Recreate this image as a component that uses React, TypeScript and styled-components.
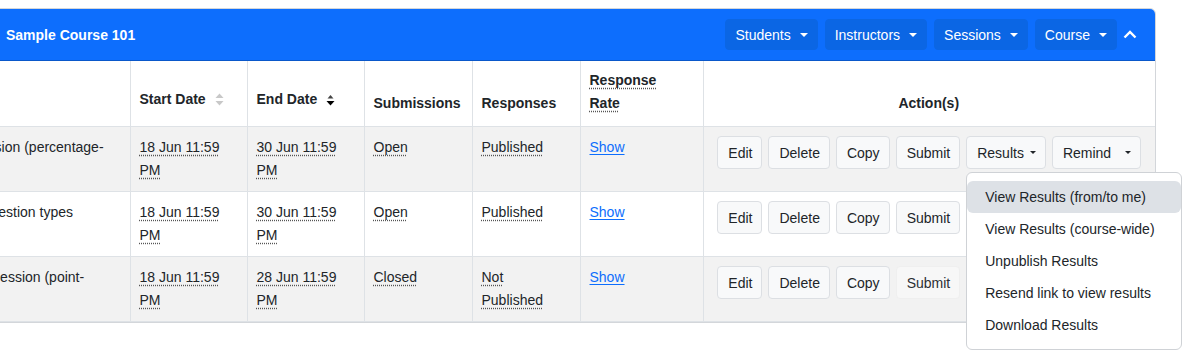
import React from "react";
import styled, { createGlobalStyle, css } from "styled-components";

const GlobalStyle = createGlobalStyle`
  html, body { margin: 0; padding: 0; background: #fff; overflow: hidden; }
  body {
    font-family: "Liberation Sans", Arial, sans-serif;
    font-size: 14px;
    color: #212529;
  }
  * { box-sizing: border-box; }
`;

const FONT = `"Liberation Sans", Arial, sans-serif`;

const Page = styled.div`
  padding-top: 8px;
  height: 359px;
`;

const Card = styled.section`
  margin-left: -11px;
  width: 1167px;
  border: 1px solid #d3d6da;
  border-radius: 6px;
  background: #fff;
`;

const CardHeader = styled.header`
  display: flex;
  align-items: center;
  justify-content: space-between;
  height: 52px;
  padding: 0 18px 0 16px;
  background: #0d6efd;
  border-bottom: 1px solid #0a58ca;
  border-radius: 5px 5px 0 0;
  color: #fff;
`;

const CourseTitle = styled.h2`
  margin: 0;
  font: 700 14px ${FONT};
  color: #fff;
`;

const HeaderActions = styled.div`
  display: flex;
  align-items: center;
  gap: 7px;
`;

const HeaderButton = styled.button`
  display: inline-flex;
  align-items: center;
  height: 31px;
  padding: 0 9px 0 9px;
  background: #0b66e4;
  border: 1px solid #0b66e4;
  border-radius: 4px;
  color: #fff;
  font: 400 14px ${FONT};
  cursor: pointer;
`;

const Caret = styled.span<{ $gap: number; $size: number }>`
  display: inline-block;
  width: 0;
  height: 0;
  margin-left: ${(p) => p.$gap}px;
  border-top: ${(p) => p.$size * 0.55}px solid currentColor;
  border-left: ${(p) => p.$size / 2}px solid transparent;
  border-right: ${(p) => p.$size / 2}px solid transparent;
`;

const Collapse = styled.svg`
  margin-left: -1px;
  display: block;
`;

/* The table is scrolled horizontally inside the card; the part scrolled
   out of view lies left of the window, so nothing needs clipping and the
   results menu can hang over the card edge. */
const TableScroller = styled.div`
  position: relative;
`;

const Table = styled.table`
  width: 1318px;
  margin-left: -153px;
  table-layout: fixed;
  border-collapse: collapse;
  font: 400 14px ${FONT};
  line-height: 23px;
`;

const Th = styled.th<{ $center?: boolean; $sortable?: boolean }>`
  vertical-align: bottom;
  text-align: ${(p) => (p.$center ? "center" : "left")};
  font-weight: 700;
  color: #212529;
  padding: 8px 10px ${(p) => (p.$sortable ? 15 : 11)}px 9px;
  border-left: 1px solid #dee2e6;
  border-bottom: 1px solid #dee2e6;
  white-space: nowrap;
  &:first-child { border-left: none; }
`;

const Row = styled.tr<{ $striped?: boolean }>`
  background: ${(p) => (p.$striped ? "#f2f2f2" : "#fff")};
`;

const Td = styled.td`
  vertical-align: top;
  padding: 9px 12px 9px 9px;
  border-left: 1px solid #dee2e6;
  border-bottom: 1px solid #dee2e6;
  &:first-child { border-left: none; }
`;

const Dotted = styled.span`
  text-decoration: underline dotted #555;
  text-underline-offset: 3px;
`;

const ShowLink = styled.a`
  color: #0d6efd;
  text-decoration: underline;
  text-underline-offset: 2px;
  cursor: pointer;
`;

const SortIcon = styled.svg`
  display: inline-block;
  vertical-align: -2px;
  margin-left: 9px;
`;

const ActionGroup = styled.div`
  display: flex;
  justify-content: center;
  gap: 6px;
  margin-right: -3px;
`;

const ActionButton = styled.button<{ $disabled?: boolean }>`
  display: inline-flex;
  align-items: center;
  height: 33px;
  padding: 0 9px 0 10px;
  background: #f8f9fa;
  border: 1px solid #dcdfe3;
  border-radius: 4px;
  color: #212529;
  font: 400 14px ${FONT};
  white-space: nowrap;
  cursor: pointer;
  ${(p) =>
    p.$disabled &&
    css`
      background: #f7f7f7;
      border-color: #efefef;
      color: #2c2f33;
      cursor: default;
    `}
`;

const DropdownWrap = styled.div`
  position: relative;
`;

const Menu = styled.ul`
  position: absolute;
  top: calc(100% + 3px);
  left: 0;
  z-index: 10;
  min-width: 216px;
  margin: 0;
  padding: 8px 0;
  list-style: none;
  background: #fff;
  border: 1px solid #cfd2d6;
  border-radius: 6px;
  white-space: nowrap;
`;

const MenuItem = styled.li<{ $active?: boolean }>`
  font: 400 14px ${FONT};
  line-height: 24px;
  padding: 4px 18px 4px 18px;
  color: #212529;
  border-radius: 6px;
  background: ${(p) => (p.$active ? "#dde1e6" : "transparent")};
  cursor: pointer;
`;

type Session = {
  name: string;
  start: string;
  end: string;
  submissions: string;
  responses: string;
  submitDisabled?: boolean;
};

const sessions: Session[] = [
  {
    name: "First team feedback session (percentage-based)",
    start: "18 Jun 11:59 PM",
    end: "30 Jun 11:59 PM",
    submissions: "Open",
    responses: "Published",
  },
  {
    name: "Session with different question types",
    start: "18 Jun 11:59 PM",
    end: "30 Jun 11:59 PM",
    submissions: "Open",
    responses: "Published",
  },
  {
    name: "Second team feedback session (point-based)",
    start: "18 Jun 11:59 PM",
    end: "28 Jun 11:59 PM",
    submissions: "Closed",
    responses: "Not Published",
    submitDisabled: true,
  },
];

const Sort = ({ active }: { active?: boolean }) => (
  <SortIcon width="9" height="13" viewBox="0 0 9 13">
    {active ? (
      <>
        <path d="M4.5 2 L7.5 5.5 H1.5 Z" fill="#444" />
        <path d="M4.5 12.5 L8.5 8 H0.5 Z" fill="#000" />
      </>
    ) : (
      <>
        <path d="M4.5 0.5 L8.5 5 H0.5 Z" fill="#c8c8c8" />
        <path d="M4.5 12.5 L8.5 8 H0.5 Z" fill="#c8c8c8" />
      </>
    )}
  </SortIcon>
);

const menuItems = [
  "View Results (from/to me)",
  "View Results (course-wide)",
  "Unpublish Results",
  "Resend link to view results",
  "Download Results",
];

export default function App() {
  return (
    <>
      <GlobalStyle />
      <Page>
        <Card>
          <CardHeader>
            <CourseTitle>Sample Course 101</CourseTitle>
            <HeaderActions>
              {["Students", "Instructors", "Sessions", "Course"].map((l) => (
                <HeaderButton key={l}>
                  {l}
                  <Caret $gap={9} $size={9} />
                </HeaderButton>
              ))}
              <Collapse width="14" height="9" viewBox="0 0 14 9">
                <polyline
                  points="1.5,7.5 7,2 12.5,7.5"
                  fill="none"
                  stroke="#fff"
                  strokeWidth="2.4"
                />
              </Collapse>
            </HeaderActions>
          </CardHeader>
          <TableScroller>
            <Table>
              <colgroup>
                <col style={{ width: 293 }} />
                <col style={{ width: 117 }} />
                <col style={{ width: 117 }} />
                <col style={{ width: 108 }} />
                <col style={{ width: 108 }} />
                <col style={{ width: 123 }} />
                <col style={{ width: 452 }} />
              </colgroup>
              <thead>
                <tr>
                  <Th $sortable>
                    Session Name
                    <Sort />
                  </Th>
                  <Th $sortable>
                    Start Date
                    <Sort />
                  </Th>
                  <Th $sortable>
                    End Date
                    <Sort active />
                  </Th>
                  <Th>Submissions</Th>
                  <Th>Responses</Th>
                  <Th>
                    <Dotted>
                      Response
                      <br />
                      Rate
                    </Dotted>
                  </Th>
                  <Th $center>Action(s)</Th>
                </tr>
              </thead>
              <tbody>
                {sessions.map((s, i) => (
                  <Row key={s.name} $striped={i % 2 === 0}>
                    <Td>{s.name}</Td>
                    <Td>
                      <Dotted>{s.start}</Dotted>
                    </Td>
                    <Td>
                      <Dotted>{s.end}</Dotted>
                    </Td>
                    <Td>
                      <Dotted>{s.submissions}</Dotted>
                    </Td>
                    <Td>
                      <Dotted>{s.responses}</Dotted>
                    </Td>
                    <Td>
                      <ShowLink>Show</ShowLink>
                    </Td>
                    <Td>
                      <ActionGroup>
                        <ActionButton>Edit</ActionButton>
                        <ActionButton>Delete</ActionButton>
                        <ActionButton>Copy</ActionButton>
                        <ActionButton $disabled={s.submitDisabled}>Submit</ActionButton>
                        <DropdownWrap>
                          <ActionButton>
                            Results
                            <Caret $gap={6} $size={7} />
                          </ActionButton>
                          {i === 0 && (
                            <Menu>
                              {menuItems.map((m, j) => (
                                <MenuItem key={m} $active={j === 0}>
                                  {m}
                                </MenuItem>
                              ))}
                            </Menu>
                          )}
                        </DropdownWrap>
                        <ActionButton>
                          Remind
                          <Caret $gap={14} $size={7} />
                        </ActionButton>
                      </ActionGroup>
                    </Td>
                  </Row>
                ))}
              </tbody>
            </Table>
          </TableScroller>
        </Card>
      </Page>
    </>
  );
}
